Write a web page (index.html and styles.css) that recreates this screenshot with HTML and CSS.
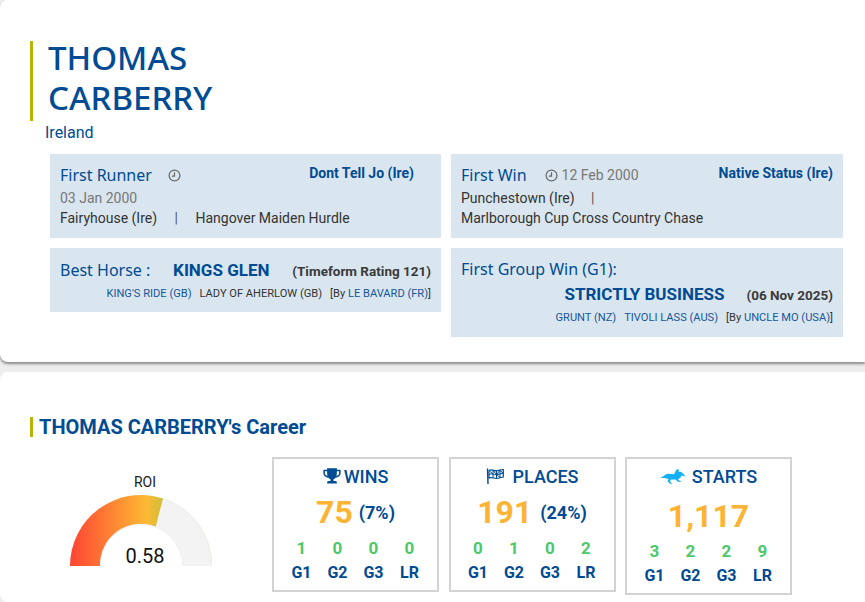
FILE: index.html
```html
<!DOCTYPE html>
<html lang="en">
<head>
  <meta charset="UTF-8">
  <title>Thomas Carberry</title>
  <link rel="stylesheet" href="styles.css">
</head>
<body>

  <!-- Profile -->
  <div class="card profile">
    <h1 class="name"><span class="name-text">THOMAS<br>CARBERRY</span></h1>
    <div class="country">Ireland</div>

    <div class="facts">
      <div class="fact-col">
        <div class="fact fact-runner">
          <div class="fact-top">
            <span class="fact-title">First Runner</span>
            <svg class="clock clock-wide" viewBox="0 0 24 24"><circle cx="12" cy="12" r="10"/><path d="M12 6V13H7"/></svg>
            <a class="fact-horse">Dont Tell Jo (Ire)</a>
          </div>
          <div class="fact-date">03 Jan 2000</div>
          <div class="fact-race">Fairyhouse (Ire) <span class="sep">|</span> Hangover Maiden Hurdle</div>
        </div>
        <div class="fact fact-best">
          <div class="best-row">
            <span class="fact-title">Best Horse :</span>
            <a class="big-horse">KINGS GLEN</a>
            <span class="rating">(Timeform Rating 121)</span>
          </div>
          <div class="pedigree"><a>KING'S RIDE (GB)</a><span>LADY OF AHERLOW (GB)</span><span>[By <a>LE BAVARD (FR)</a>]</span></div>
        </div>
      </div>

      <div class="fact-col">
        <div class="fact fact-runner">
          <div class="fact-top fact-top-short">
            <span class="fact-title">First Win</span>
            <span class="fact-date inline-date"><svg class="clock" viewBox="0 0 24 24"><circle cx="12" cy="12" r="10"/><path d="M12 6V13H7"/></svg>12 Feb 2000</span>
            <a class="fact-horse">Native Status (Ire)</a>
          </div>
          <div class="fact-race">Punchestown (Ire) <span class="sep sep-short">|</span></div>
          <div class="fact-race">Marlborough Cup Cross Country Chase</div>
        </div>
        <div class="fact fact-group">
          <div class="fact-title">First Group Win (G1):</div>
          <div class="best-row best-right">
            <a class="big-horse">STRICTLY BUSINESS</a>
            <span class="rating">(06 Nov 2025)</span>
          </div>
          <div class="pedigree"><a>GRUNT (NZ)</a><a>TIVOLI LASS (AUS)</a><span>[By <a>UNCLE MO (USA)</a>]</span></div>
        </div>
      </div>
    </div>
  </div>

  <!-- Career -->
  <div class="card career">
    <h2 class="career-title">THOMAS CARBERRY's Career</h2>
    <div class="career-row">
      <div class="gauge">
        <div class="gauge-label">ROI</div>
        <svg class="gauge-svg" viewBox="0 0 142 75" width="142" height="75">
          <defs>
            <linearGradient id="roiGrad" gradientUnits="userSpaceOnUse" x1="0" y1="0" x2="93" y2="0">
              <stop offset="0" stop-color="#ff4433"/>
              <stop offset="0.82" stop-color="#fdb933"/>
              <stop offset="1" stop-color="#cdbd3a"/>
            </linearGradient>
          </defs>
          <path class="gauge-rest" d="M0 75A71 71 0 0 1 142 75H112A41 41 0 0 0 30 75Z"/>
          <path class="gauge-edge" d="M93 7.500A71 71 0 0 1 142 75"/>
          <path fill="url(#roiGrad)" d="M0 75A71 71 0 0 1 93 7.5L85.7 35.4A41 41 0 0 0 30 75Z"/>
        </svg>
        <div class="gauge-value">0.58</div>
      </div>

      <div class="stat">
        <div class="stat-head">
          <svg class="ico-trophy" viewBox="0 0 24 21"><path d="M5.500 0H18.500V2H23.500V6.500C23.500 10 20.500 12.500 16.800 12.700C16 13.700 15 14.400 14 14.800V17H16.500C17.800 17 18.500 18 18.500 19V20.500H5.500V19C5.500 18 6.200 17 7.500 17H10V14.800C9 14.400 8 13.700 7.200 12.700C3.500 12.500 .5 10 .5 6.500V2H5.500ZM2.500 4V6.500C2.500 8.500 4 10 6 10.500C5.700 9 5.500 6.500 5.500 4ZM21.500 4H18.500C18.500 6.500 18.300 9 18 10.500C20 10 21.500 8.500 21.500 6.500Z"/></svg>
          WINS
        </div>
        <div class="stat-main"><span class="stat-num">75</span><span class="stat-pct">(7%)</span></div>
        <div class="stat-grid">
          <b>1</b><b>0</b><b>0</b><b>0</b>
          <span>G1</span><span>G2</span><span>G3</span><span>LR</span>
        </div>
      </div>

      <div class="stat">
        <div class="stat-head stat-head-wide">
          <svg class="ico-flag" viewBox="0 0 18 16"><path class="flag-pole" d="M1.500 .5L2 16"/><path class="flag-cloth" d="M3 2.500C5.500 .8 8 3 10.500 2.800C13 2.600 15 1.500 17.300 1.500L17.300 9C15 9 13 10.500 10.500 10.500C8 10.500 5.500 8.800 3 10Z"/><path class="flag-check" d="M3 6.500C5.500 5 8 7 10.500 6.700C13 6.500 15 5.300 17.300 5.200M7 2.300L7 9.700M10.500 2.800L10.500 10.500M14 2L14 9.800M3.500 3L7 6M7 2.500L10.500 6.500L14 9.500M10.500 6.500L14 2.500L17 5"/></svg>
          PLACES
        </div>
        <div class="stat-main stat-main-wide"><span class="stat-num">191</span><span class="stat-pct">(24%)</span></div>
        <div class="stat-grid">
          <b>0</b><b>1</b><b>0</b><b>2</b>
          <span>G1</span><span>G2</span><span>G3</span><span>LR</span>
        </div>
      </div>

      <div class="stat stat-starts">
        <div class="stat-head stat-head-wide stat-head-starts">
          <svg class="ico-horse" viewBox="0 0 25 15"><path d="M0 8.500C2 8.500 4 7 5.500 5.500C7 4.500 9 4.500 11 5L14 5.200L15.500 2.500C15.500 1 16.500 0 18 .2C19 .5 19 1.500 18.500 2.500L20 3L21 2.800L25 6.500L24.200 7.500L21.500 6.200C21 8 20 9.500 18 10L19 11.500L21 12L20.500 13L17.500 12.500L15.500 10.500L11 10.500L10 12.500L12 15L10.500 15L7.500 12.500L8.500 10C6.500 9 4 9.800 0 8.500Z"/></svg>
          STARTS
        </div>
        <div class="stat-main stat-main-tall"><span class="stat-num">1,117</span></div>
        <div class="stat-grid">
          <b>3</b><b>2</b><b>2</b><b>9</b>
          <span>G1</span><span>G2</span><span>G3</span><span>LR</span>
        </div>
      </div>
    </div>
  </div>

</body>
</html>
```

FILE: styles.css
```css
body {
  margin: 0;
  height: 602px;
  overflow: hidden;
  background-color: #eeeeee;
  font-family: Roboto, sans-serif;
  color: #333;
}

a {
  color: #004b93;
}

.card {
  background-color: #fff;
  border-radius: 8px 0 0 8px;
}

.profile {
  height: 321px;
  padding-top: 41px;
  margin-bottom: 10px;
  box-shadow: 0 2px 3px #888;
}

.name {
  display: flow-root;
  height: 80px;
  margin: 0 0 0 30px;
  padding-left: 15px;
  border-left: 3px solid #b5b500;
  font-family: "Noto Sans", sans-serif;
  font-size: 33px;
  line-height: 39.500px;
  font-weight: 500;
  color: #004b93;
}

.name-text {
  display: block;
  margin-top: -3px;
}

.country {
  margin: 2px 0 12px 45px;
  font-size: 16px;
  line-height: 19px;
  color: #004b93;
}

.facts {
  display: grid;
  grid-template-columns: 391px 392px;
  gap: 10px;
  margin-left: 50px;
}

.fact-col {
  display: flex;
  flex-direction: column;
  gap: 10px;
}

.fact {
  background-color: #dae6ef;
  padding: 0 10px;
  font-size: 14px;
}

.fact-runner {
  height: 84px;
  padding-top: 9px;
  box-sizing: border-box;
}

.fact-best {
  height: 64px;
  padding-top: 9px;
  box-sizing: border-box;
}

.fact-group {
  height: 89px;
  padding-top: 9px;
  box-sizing: border-box;
}

.fact-top {
  display: flex;
  align-items: flex-start;
  height: 26px;
}

.fact-top-short {
  height: 25px;
}

.fact-title {
  font-family: "Noto Sans", sans-serif;
  font-size: 16px;
  line-height: 24px;
  color: #004b93;
}

.fact-horse {
  margin-left: auto;
  font-size: 14px;
  line-height: 20px;
  font-weight: 700;
}

.clock {
  width: 13px;
  height: 13px;
  fill: none;
  stroke: #666;
  stroke-width: 2.200;
  margin-right: 4px;
  vertical-align: -2px;
}

.clock-wide {
  flex-shrink: 0;
  margin: 6px auto 0 16px;
}

.fact-top .fact-horse {
  margin-left: 0;
}

.fact-top .clock-wide + .fact-horse {
  margin-right: 17px;
}

.fact-date {
  color: #777;
  line-height: 19px;
}

.inline-date {
  margin: 3px auto 0 18px;
}

.fact-race {
  line-height: 20px;
  color: #333;
}

.sep {
  margin: 0 14px;
  color: #555;
}

.sep-short {
  margin: 0 0 0 13px;
}

.best-row {
  display: flex;
  align-items: baseline;
  justify-content: space-between;
  height: 28px;
  padding-top: 1px;
}

.best-right {
  justify-content: flex-end;
  gap: 22px;
  height: 26px;
  padding-top: 3px;
}

.big-horse {
  font-size: 17px;
  font-weight: 700;
}

.rating {
  font-size: 13.500px;
  font-weight: 700;
  color: #3a3a3a;
}

.pedigree {
  display: flex;
  justify-content: flex-end;
  gap: 8px;
  font-size: 11.100px;
  line-height: 16px;
}

.pedigree a {
  color: #14569c;
}

.career {
  height: 185px;
  padding: 45px 0 0 30px;
}

.career-title {
  margin: 0 0 20px;
  padding-left: 6px;
  border-left: 3px solid #b5b500;
  font-size: 20px;
  line-height: 20px;
  font-weight: 700;
  color: #004b93;
}

.career-row {
  display: flex;
  align-items: flex-start;
  gap: 9.500px;
}

.gauge {
  position: relative;
  width: 232.500px;
  padding-top: 16px;
  text-align: center;
}

.gauge-label {
  width: 230px;
  font-size: 14px;
  line-height: 18px;
  color: #222;
}

.gauge-svg {
  display: block;
  margin: 0 0 0 40px;
}

.gauge-rest {
  fill: #f3f3f3;
}

.gauge-edge {
  fill: none;
  stroke: #d5e5cc;
  stroke-width: .5;
}

.gauge-value {
  position: absolute;
  left: 40px;
  top: 87px;
  width: 150px;
  font-size: 20px;
  line-height: 24px;
  color: #111;
}

.stat {
  box-sizing: border-box;
  width: 167px;
  height: 135px;
  padding-top: 7px;
  border: 2px solid #d3d3d3;
  text-align: center;
}

.stat-starts {
  height: 138px;
}

.stat-head {
  display: flex;
  align-items: center;
  justify-content: center;
  gap: 3px;
  height: 20px;
  font-size: 18px;
  font-weight: 500;
  color: #004b93;
}

.stat-head-wide {
  gap: 9px;
}

.stat-head-starts {
  gap: 7px;
}

.ico-trophy {
  width: 18px;
  height: 16px;
  fill: #004b93;
  fill-rule: evenodd;
}

.ico-flag {
  width: 18px;
  height: 16px;
}

.flag-pole {
  fill: none;
  stroke: #004b93;
  stroke-width: 1.400;
}

.flag-cloth {
  fill: #fff;
  stroke: #004b93;
  stroke-width: 1.200;
}

.flag-check {
  fill: none;
  stroke: #004b93;
  stroke-width: 1;
}

.ico-horse {
  width: 25px;
  height: 15px;
  fill: #14b0f5;
}

.stat-main {
  display: flex;
  align-items: center;
  justify-content: center;
  gap: 6px;
  height: 44px;
  margin-top: 4px;
}

.stat-main-wide {
  gap: 8px;
}

.stat-main-tall {
  height: 42px;
  margin-top: 9px;
}

.stat-num {
  font-size: 32px;
  line-height: 44px;
  font-weight: 700;
  color: #fdb333;
}

.stat-pct {
  font-size: 18px;
  font-weight: 700;
  color: #004b93;
}

.stat-grid {
  display: grid;
  grid-template-columns: repeat(4, 36px);
  justify-content: center;
  margin-top: 2px;
  font-size: 16px;
  line-height: 25px;
}

.stat-grid b {
  font-size: 17px;
  line-height: 24px;
  font-weight: 700;
  color: #4dc86a;
}

.stat-grid span {
  font-weight: 700;
  color: #004b93;
}
```
